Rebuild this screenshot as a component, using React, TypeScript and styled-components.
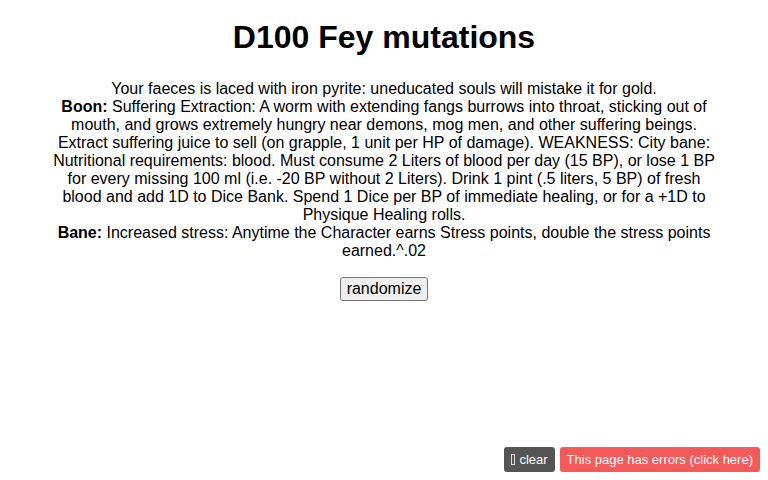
import React from "react";
import styled, { createGlobalStyle } from "styled-components";

const GlobalStyle = createGlobalStyle`
  body {
    margin: 0;
    background: #ffffff;
    color: #000000;
    font-family: "Liberation Sans", Arial, sans-serif;
  }
`;

const Page = styled.main`
  display: flex;
  flex-direction: column;
  align-items: center;
  padding: 0 8px;
`;

const Title = styled.h1`
  font-size: 32px;
  font-weight: bold;
  margin: 19px 0 24px;
  line-height: 37px;
  text-align: center;
`;

const Mutation = styled.div`
  max-width: 672px;
  font-size: 16px;
  line-height: normal;
  text-align: center;
`;

const Label = styled.b`
  font-weight: bold;
`;

const RandomButton = styled.button`
  margin-top: 17px;
  font-family: "Liberation Sans", Arial, sans-serif;
  font-size: 16px;
  line-height: 18px;
  padding: 2px 6px;
  background: #efefef;
  border: 1px solid #767676;
  border-radius: 3px;
  color: #000000;
`;

const ErrorBar = styled.div`
  position: fixed;
  right: 8px;
  bottom: 8px;
  display: flex;
  gap: 5px;
`;

const Pill = styled.button<{ $tone: "dark" | "red" }>`
  font-family: "Liberation Sans", Arial, sans-serif;
  font-size: 13px;
  line-height: 15px;
  height: 25px;
  padding: 0 7px;
  border: none;
  border-radius: 3px;
  color: #ffffff;
  background: ${(p) => (p.$tone === "dark" ? "#555555" : "#f55a5a")};
  display: flex;
  align-items: center;
  gap: 4px;
`;

const Tofu = styled.span`
  display: inline-block;
  width: 2px;
  height: 9px;
  border: 1px solid #ffffff;
  opacity: 0.8;
`;

export default function App() {
  return (
    <>
      <GlobalStyle />
      <Page>
        <Title>D100 Fey mutations</Title>
        <Mutation>
          Your faeces is laced with iron pyrite: uneducated souls will mistake
          it for gold.
          <br />
          <Label>Boon:</Label> Suffering Extraction: A worm with extending fangs
          burrows into throat, sticking out of mouth, and grows extremely hungry
          near demons, mog men, and other suffering beings. Extract suffering
          juice to sell (on grapple, 1 unit per HP of damage). WEAKNESS: City
          bane: Nutritional requirements: blood. Must consume 2 Liters of blood
          per day (15 BP), or lose 1 BP for every missing 100 ml (i.e. -20 BP
          without 2 Liters). Drink 1 pint (.5 liters, 5 BP) of fresh blood and
          add 1D to Dice Bank. Spend 1 Dice per BP of immediate healing, or for
          a +1D to Physique Healing rolls.
          <br />
          <Label>Bane:</Label> Increased stress: Anytime the Character earns
          Stress points, double the stress points earned.^.02
        </Mutation>
        <RandomButton>randomize</RandomButton>
      </Page>
      <ErrorBar>
        <Pill $tone="dark">
          <Tofu /> clear
        </Pill>
        <Pill $tone="red">This page has errors (click here)</Pill>
      </ErrorBar>
    </>
  );
}
